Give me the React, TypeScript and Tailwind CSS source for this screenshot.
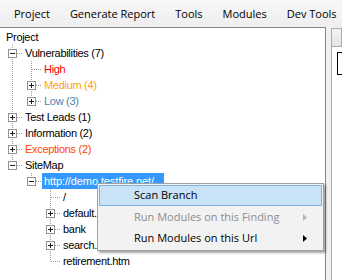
import React from 'react';

type Row = {
  label: string;
  level: number; // -1 = root
  pipes: boolean[]; // ancestor guide columns that keep going
  last?: boolean;
  box?: 'plus' | 'minus';
  color?: string;
  selected?: boolean;
};

const rows: Row[] = [
  { label: 'Project', level: -1, pipes: [] },
  { label: 'Vulnerabilities (7)', level: 0, pipes: [], box: 'minus' },
  { label: 'High', level: 1, pipes: [true], color: 'text-[#ff0000]' },
  { label: 'Medium (4)', level: 1, pipes: [true], box: 'plus', color: 'text-[#ffa500]' },
  { label: 'Low (3)', level: 1, pipes: [true], box: 'plus', last: true, color: 'text-[#4682b4]' },
  { label: 'Test Leads (1)', level: 0, pipes: [], box: 'plus' },
  { label: 'Information (2)', level: 0, pipes: [], box: 'plus' },
  { label: 'Exceptions (2)', level: 0, pipes: [], box: 'plus', color: 'text-[#ff4500]' },
  { label: 'SiteMap', level: 0, pipes: [], box: 'minus', last: true },
  { label: 'http://demo.testfire.net/', level: 1, pipes: [false], box: 'minus', last: true, selected: true },
  { label: '/', level: 2, pipes: [false, false] },
  { label: 'default.', level: 2, pipes: [false, false], box: 'plus' },
  { label: 'bank', level: 2, pipes: [false, false], box: 'plus' },
  { label: 'search.', level: 2, pipes: [false, false], box: 'plus' },
  { label: 'retirement.htm', level: 2, pipes: [false, false], last: true },
];

const DOT = '#a0a0a0';

const Guide = ({ pipe }: { pipe: boolean }) => (
  <svg width="19" height="16" className="shrink-0">
    {pipe && <line x1="9.5" y1="0" x2="9.5" y2="16" stroke={DOT} strokeDasharray="1 1" />}
  </svg>
);

const Connector = ({ last, box }: { last?: boolean; box?: 'plus' | 'minus' }) => (
  <svg width="19" height="16" className="shrink-0">
    <line x1="9.5" y1="0" x2="9.5" y2={last ? 8.5 : 16} stroke={DOT} strokeDasharray="1 1" />
    <line x1="10" y1="8.5" x2="19" y2="8.5" stroke={DOT} strokeDasharray="1 1" />
    {box && (
      <>
        <rect x="5.5" y="4.5" width="8" height="8" fill="#ffffff" stroke="#919191" />
        <line x1="7" y1="8.5" x2="12" y2="8.5" stroke="#1e1e1e" />
        {box === 'plus' && <line x1="9.5" y1="6" x2="9.5" y2="11" stroke="#1e1e1e" />}
      </>
    )}
  </svg>
);

const Arrow = ({ color }: { color: string }) => (
  <svg width="4" height="7" viewBox="0 0 4 7">
    <polygon points="0,0 4,3.5 0,7" fill={color} />
  </svg>
);

export default function App() {
  const menus = ['Project', 'Generate Report', 'Tools', 'Modules', 'Dev Tools'];

  return (
    <div className="relative w-[342px] h-[280px] overflow-hidden bg-[#f0f0f0] flex flex-col">
      {/* Menu strip */}
      <div className="h-[27px] shrink-0 flex items-center pl-[4px] pt-[2px] bg-gradient-to-b from-[#f7f7f7] to-[#eeeeee] text-[11px] text-black font-['Open_Sans',sans-serif] whitespace-nowrap">
        {menus.map((m) => (
          <span key={m} className="px-[10px]">{m}</span>
        ))}
      </div>

      <div className="flex flex-1 min-h-0">
        {/* Tree view */}
        <div className="w-[326px] shrink-0 bg-white border-t border-r border-[#828790] pt-px pl-[3px] font-['Liberation_Sans',Arial,sans-serif] text-[11px] tracking-[-0.3px] text-black">
          {rows.map((r) => (
            <div key={r.label} className="flex items-center h-[16px] whitespace-nowrap">
              {r.level >= 0 && (
                <>
                  {r.pipes.map((p, i) => (
                    <Guide key={i} pipe={p} />
                  ))}
                  <Connector last={r.last} box={r.box} />
                </>
              )}
              <span
                className={
                  r.selected
                    ? 'ml-px pl-[2px] pr-[10px] h-[16px] leading-[16px] bg-[#3399ff] text-white tracking-[-0.1px]'
                    : `ml-[3px] leading-[16px] ${r.color ?? ''}`
                }
              >
                {r.label}
              </span>
            </div>
          ))}
        </div>

        {/* Right panel */}
        <div className="flex-1 flex flex-col pl-[5px] pt-px">
          <div className="h-[18px] shrink-0 border border-b-0 border-[#acacac] bg-gradient-to-b from-[#f2f2f2] to-[#e5e5e5]" />
          <div className="flex-1 bg-white border-l border-t border-[#acacac] pl-[5px] pt-[5px]">
            <div className="h-[23px] border-l border-t border-b border-black" />
          </div>
        </div>
      </div>

      {/* Context menu */}
      <div className="absolute left-[97px] top-[183px] w-[227px] bg-[#f2f2f2] border border-[#a0a0a0] shadow-[2px_2px_2px_rgba(0,0,0,0.35)] py-px px-px font-['Open_Sans',sans-serif] text-[11px] whitespace-nowrap">
        <div className="h-[21px] flex items-center pl-[34px] pr-[14px] bg-[#c8e2f8] border border-[#7fb2e3] text-black">
          Scan Branch
        </div>
        <div className="h-[22px] flex items-center justify-between pl-[35px] pr-[15px] text-[#8d8d8d]">
          <span>Run Modules on this Finding</span>
          <Arrow color="#b4b4b4" />
        </div>
        <div className="h-[21px] flex items-center justify-between pl-[35px] pr-[15px] text-black">
          <span>Run Modules on this Url</span>
          <Arrow color="#000000" />
        </div>
      </div>
    </div>
  );
}
